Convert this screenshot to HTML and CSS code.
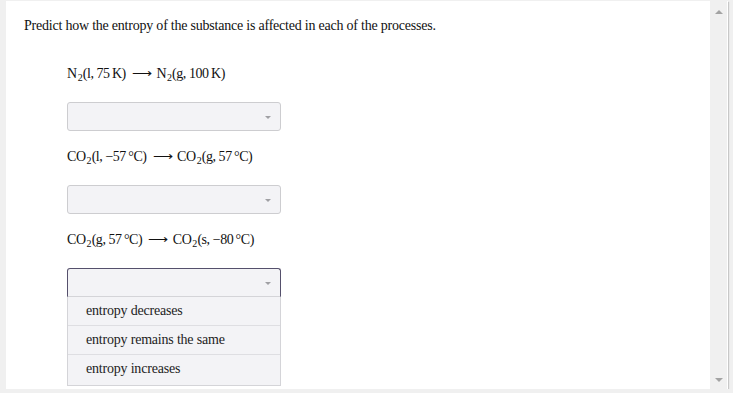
FILE: index.html
```html
<!DOCTYPE html>
<html>
	<head>
		<meta charset="utf-8"/>
		<title>Entropy</title>
		<link rel="stylesheet" href="styles.css">
	</head>
	<body>
		<div class="panel">
			<div class="content">
				<p class="question">Predict how the entropy of the substance is affected in each of the processes.</p>

				<div class="item">
					<p class="eq">N<sub>2</sub>(l, 75&thinsp;K)<span class="arr">&#10230;</span>N<sub>2</sub>(g, 100&thinsp;K)</p>
					<div class="select"><span class="caret"></span></div>
				</div>

				<div class="item">
					<p class="eq">CO<sub>2</sub>(l, &minus;57&thinsp;&deg;C)<span class="arr">&#10230;</span>CO<sub>2</sub>(g, 57&thinsp;&deg;C)</p>
					<div class="select"><span class="caret"></span></div>
				</div>

				<div class="item">
					<p class="eq">CO<sub>2</sub>(g, 57&thinsp;&deg;C)<span class="arr">&#10230;</span>CO<sub>2</sub>(s, &minus;80&thinsp;&deg;C)</p>
					<div class="select open"><span class="caret"></span></div>
					<ul class="menu">
						<li>entropy decreases</li>
						<li>entropy remains the same</li>
						<li>entropy increases</li>
					</ul>
				</div>
			</div>
			<div class="scrollbar">
				<span class="up"></span>
				<span class="down"></span>
			</div>
		</div>
	</body>
</html>
```

FILE: styles.css
```css
*{margin:0;padding:0;box-sizing:border-box;list-style-type:none;}
body
{
	background:#f0f0f0;
	font-family:"Liberation Serif","Times New Roman",serif;
	font-size:14px;
	color:#111;
}
.panel
{
	width:722px;
	height:388px;
	margin:1px 0 0 6px;
	background:#fff;
	display:flex;
	box-shadow:1px 1px 1px #c8c8c8;
	overflow:hidden;
}
.content
{
	flex:1;
	padding:15px 0 0 18px;
}
.question
{
	line-height:20px;
	letter-spacing:-0.22px;
}
.item
{
	margin-left:43px;
	width:214px;
}
.question+.item{margin-top:28px;}
.item+.item{margin-top:16px;}
.eq
{
	line-height:20px;
	white-space:nowrap;
	letter-spacing:-0.45px;
}
.eq sub
{
	font-size:10px;
	vertical-align:-3px;
	line-height:0;
	margin:0 0.5px 0 1px;
}
.arr
{
	display:inline-block;
	margin:0 5px 0 6px;
}
.select
{
	margin-top:18px;
	height:29px;
	border:1px solid #cdcdd0;
	border-radius:3px;
	background:#f3f3f6;
	position:relative;
}
.select.open
{
	border-color:#55506c;
	border-bottom-color:#d4d4d8;
	border-radius:3px 3px 0 0;
}
.caret
{
	position:absolute;
	right:9px;
	top:13px;
	border-left:3px solid transparent;
	border-right:3px solid transparent;
	border-top:3px solid #a0a0a4;
}
.menu
{
	border:1px solid #d4d4d8;
	border-top:none;
	background:#f3f3f6;
}
.menu li
{
	height:29px;
	line-height:28px;
	padding-left:18px;
	border-bottom:1px solid #dedee2;
	color:#222;
	letter-spacing:-0.2px;
}
.menu li:last-child{border-bottom:none;height:30px;}
.scrollbar
{
	width:17px;
	background:#f0f0f0;
	display:flex;
	flex-direction:column;
	justify-content:space-between;
	align-items:center;
	padding:9px 0 7px;
	margin-right:1px;
}
.up,.down
{
	width:0;
	height:0;
	border-left:4px solid transparent;
	border-right:4px solid transparent;
}
.up{border-bottom:4px solid #a3a3a3;}
.down{border-top:4px solid #a3a3a3;}
```
